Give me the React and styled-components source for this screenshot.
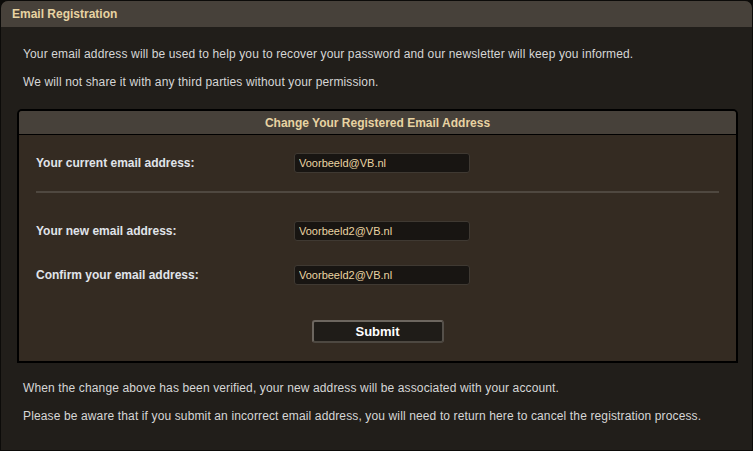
import React from 'react';
import styled, { createGlobalStyle } from 'styled-components';

const Global = createGlobalStyle`
  html, body {
    margin: 0;
    padding: 0;
    background: #0c0b09;
  }
  body {
    font-family: "Liberation Sans", Arial, sans-serif;
    font-size: 12px;
  }
`;

const Panel = styled.section`
  width: 753px;
  height: 451px;
  box-sizing: border-box;
  border: 1px solid #0c0b09;
  border-radius: 8px 8px 0 0;
  background: #211e1a;
  overflow: hidden;
`;

const PanelHeader = styled.header`
  height: 26px;
  display: flex;
  align-items: center;
  padding: 0 11px;
  background: #47413a;
  color: #e8d3a2;
  font-weight: bold;
  font-size: 12px;
`;

const PanelBody = styled.div`
  padding: 19px 14px 0 16px;
`;

const Text = styled.p`
  margin: 0 6px 12px;
  line-height: 16px;
  letter-spacing: 0.13px;
  color: #d6d6d6;
`;

const Box = styled.div`
  margin: 19px 0 17px;
  border: 2px solid #000;
  border-radius: 5px 5px 0 0;
  background: #342b22;
`;

const BoxHeader = styled.div`
  height: 23px;
  display: flex;
  align-items: center;
  justify-content: center;
  background: #47413a;
  border-bottom: 1px solid #000;
  border-radius: 3px 3px 0 0;
  color: #e8d3a2;
  font-weight: bold;
`;

const BoxBody = styled.div`
  padding: 18px 17px 18px;
  display: flex;
  flex-direction: column;
`;

const Row = styled.div`
  display: grid;
  grid-template-columns: 258px 176px;
  align-items: center;
  height: 20px;
  margin-top: ${p => p.$gap || 0}px;
`;

const Label = styled.label`
  color: #e0e4ea;
  font-weight: bold;
`;

const Input = styled.input`
  box-sizing: border-box;
  height: 20px;
  width: 176px;
  padding: 0 4px;
  border: 1px solid #3f3932;
  border-radius: 3px;
  background: #181512;
  color: #ead4a2;
  font-family: "Liberation Sans", Arial, sans-serif;
  font-size: 11px;
  outline: none;
`;

const Divider = styled.hr`
  margin: 18px 0 28px;
  border: 0;
  height: 2px;
  background: #4f4840;
`;

const Actions = styled.div`
  display: flex;
  justify-content: center;
  margin-top: 35px;
`;

const Button = styled.button`
  width: 132px;
  height: 23px;
  border: 2px solid #6c665f;
  border-bottom-color: #4d4841;
  border-right-color: #55504a;
  border-radius: 3px;
  background: #1f1c18;
  color: #fff;
  font-family: "Liberation Sans", Arial, sans-serif;
  font-weight: bold;
  font-size: 13px;
  padding: 0;
`;

export default function App() {
  return (
    <>
      <Global />
      <Panel>
        <PanelHeader>Email Registration</PanelHeader>
        <PanelBody>
          <Text>Your email address will be used to help you to recover your password and our newsletter will keep you informed.</Text>
          <Text>We will not share it with any third parties without your permission.</Text>
          <Box>
            <BoxHeader>Change Your Registered Email Address</BoxHeader>
            <BoxBody>
              <Row>
                <Label>Your current email address:</Label>
                <Input defaultValue="Voorbeeld@VB.nl" />
              </Row>
              <Divider />
              <Row>
                <Label>Your new email address:</Label>
                <Input defaultValue="Voorbeeld2@VB.nl" />
              </Row>
              <Row $gap={24}>
                <Label>Confirm your email address:</Label>
                <Input defaultValue="Voorbeeld2@VB.nl" />
              </Row>
              <Actions>
                <Button>Submit</Button>
              </Actions>
            </BoxBody>
          </Box>
          <Text>When the change above has been verified, your new address will be associated with your account.</Text>
          <Text>Please be aware that if you submit an incorrect email address, you will need to return here to cancel the registration process.</Text>
        </PanelBody>
      </Panel>
    </>
  );
}
